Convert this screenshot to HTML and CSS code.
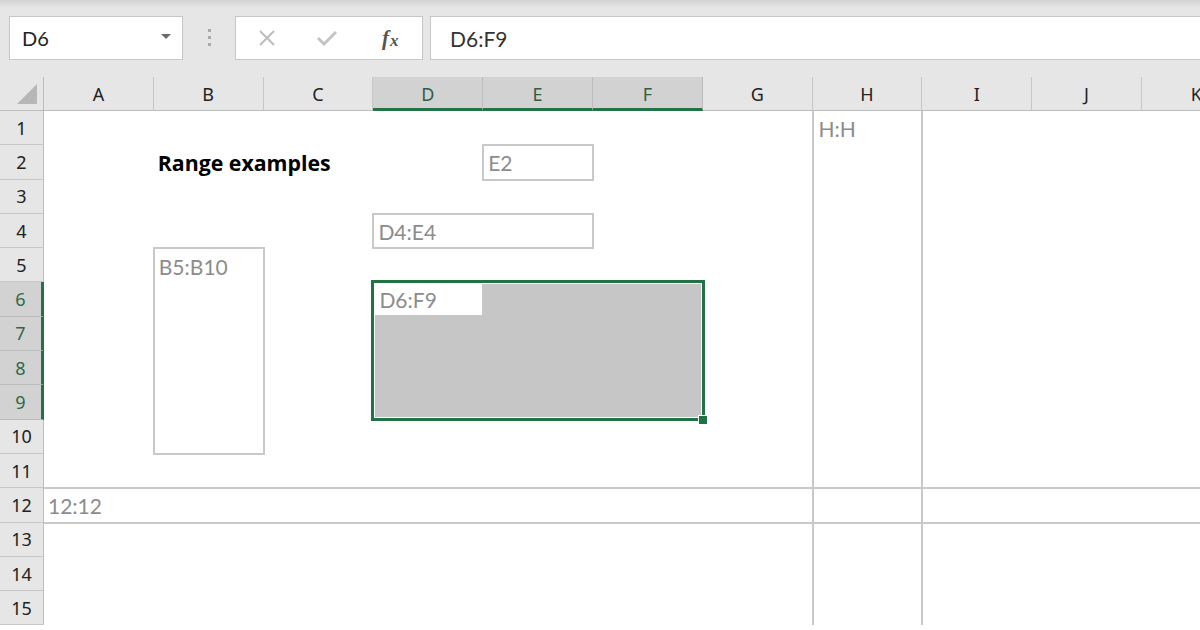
FILE: index.html
```html
<!DOCTYPE html>
<html>
<head>
<meta charset="utf-8">
<link rel="stylesheet" href="styles.css">
</head>
<body>
<div class="toolbar">
  <div class="namebox"><span>D6</span><span class="caret"></span></div>
  <div class="grip"><span></span><span></span><span></span></div>
  <div class="fbtns">
    <svg class="ic-x" width="18" height="16" viewBox="0 0 18 16"><path d="M2 1 L16 15 M16 1 L2 15" stroke="#bdbdbd" stroke-width="2" fill="none"/></svg>
    <svg class="ic-ok" width="22" height="16" viewBox="0 0 22 16"><path d="M2 8 L8 14 L20 2" stroke="#c4c4c4" stroke-width="3" fill="none"/></svg>
    <span class="fx">f<span class="fxx">x</span></span>
  </div>
  <div class="formula">D6:F9</div>
</div>
<div class="sheet">
  <div class="corner"><svg width="20" height="20" viewBox="0 0 20 20"><path d="M20 0 L20 20 L0 20 Z" fill="#b7b7b7"/></svg></div>
  <div class="ch">A</div>
  <div class="ch">B</div>
  <div class="ch">C</div>
  <div class="ch sel-h">D</div>
  <div class="ch sel-h">E</div>
  <div class="ch sel-h">F</div>
  <div class="ch">G</div>
  <div class="ch">H</div>
  <div class="ch">I</div>
  <div class="ch">J</div>
  <div class="ch">K</div>
  <div class="rh">1</div>
  <div class="rh">2</div>
  <div class="rh">3</div>
  <div class="rh">4</div>
  <div class="rh">5</div>
  <div class="rh sel-r">6</div>
  <div class="rh sel-r">7</div>
  <div class="rh sel-r">8</div>
  <div class="rh sel-r">9</div>
  <div class="rh">10</div>
  <div class="rh">11</div>
  <div class="rh">12</div>
  <div class="rh">13</div>
  <div class="rh">14</div>
  <div class="rh">15</div>

  <div class="title">Range examples</div>
  <div class="box e2 val">E2</div>
  <div class="box d4 val">D4:E4</div>
  <div class="box b5 val"><span class="topline">B5:B10</span></div>
  <div class="hcol"></div>
  <div class="hlabel val">H:H</div>
  <div class="row12 val">12:12</div>
  <div class="sel"></div>
  <div class="act val">D6:F9</div>
  <div class="handle"></div>
</div>
</body>
</html>
```
FILE: styles.css
```css
* { box-sizing: border-box; }
body {
  margin: 0;
  width: 1200px;
  height: 630px;
  overflow: hidden;
  background: #fff;
  font-family: "Noto Sans", sans-serif;
}
.toolbar {
  height: 77px;
  background: linear-gradient(#d3d3d3, #e6e6e6 8px);
  display: flex;
  align-items: flex-start;
  padding: 16px 0 0 9px;
}
.namebox {
  width: 174px;
  height: 44px;
  background: #fff;
  border: 1px solid #c6c6c6;
  display: flex;
  align-items: center;
  justify-content: space-between;
  padding: 0 11px 0 12px;
  font-family: "Lato", sans-serif;
  font-size: 20px;
  color: #222;
}
.caret {
  width: 0;
  height: 0;
  border-left: 5px solid transparent;
  border-right: 5px solid transparent;
  border-top: 5px solid #6b6b6b;
  margin-bottom: 4px;
}
.grip {
  width: 52px;
  display: flex;
  flex-direction: column;
  align-items: center;
  gap: 4px;
  padding-top: 13px;
}
.grip span { width: 3px; height: 3px; background: #a9a9a9; }
.fbtns {
  width: 188px;
  height: 44px;
  background: #fff;
  border: 1px solid #c6c6c6;
  display: flex;
  align-items: center;
  padding-left: 22px;
}
.ic-x { margin-right: 40px; }
.ic-ok { margin-right: 44px; }
.fx {
  font-family: "Liberation Serif", serif;
  font-style: italic;
  font-weight: bold;
  font-size: 21px;
  color: #555;
  display: flex;
  align-items: baseline;
}
.fxx { font-size: 17px; position: relative; top: 1px; margin-left: 1px; }
.formula {
  margin-left: 7px;
  flex: 1;
  height: 44px;
  background: #fff;
  border: 1px solid #c6c6c6;
  border-right: none;
  display: flex;
  align-items: center;
  padding-left: 19px;
  font-family: "Lato", sans-serif;
  font-size: 21px;
  color: #333;
}
.sheet {
  display: grid;
  grid-template-columns: 44px repeat(11, 109.8px);
  grid-template-rows: 34px repeat(15, 34.3px);
}
.corner {
  background: #e6e6e6;
  border-right: 1px solid #bdbdbd;
  border-bottom: 1px solid #bdbdbd;
  display: flex;
  align-items: flex-end;
  justify-content: flex-end;
  padding: 0 6px 6px 0;
}
.ch {
  background: #e6e6e6;
  border-right: 1px solid #c6c6c6;
  border-bottom: 1px solid #bdbdbd;
  display: flex;
  align-items: center;
  justify-content: center;
  font-size: 18px;
  color: #222;
}
.ch.sel-h {
  background: #d2d2d2;
  color: #2f5e43;
  border-right-color: #bcbcbc;
  border-bottom: 3px solid #217346;
  padding-top: 2px;
}
.rh {
  grid-column: 1;
  background: #e6e6e6;
  border-right: 1px solid #bdbdbd;
  border-bottom: 1px solid #c6c6c6;
  display: flex;
  align-items: center;
  justify-content: center;
  font-size: 18px;
  color: #222;
}
.rh.sel-r {
  background: #d2d2d2;
  color: #2f6a48;
  border-right: 3px solid #217346;
  border-bottom-color: #bcbcbc;
}
.val {
  font-family: "Lato", sans-serif;
  font-size: 21px;
  color: #8c8c8c;
  display: flex;
  align-items: center;
  padding-left: 4px;
}
.title {
  grid-column: 3 / 5;
  grid-row: 3;
  font-family: "Open Sans", sans-serif;
  font-weight: bold;
  font-size: 21.3px;
  color: #000;
  display: flex;
  align-items: center;
  padding-left: 4px;
}
.box {
  border: 2px solid #c9c9c9;
  margin: -1px;
}
.e2 { grid-column: 6 / 7; grid-row: 3; }
.d4 { grid-column: 5 / 7; grid-row: 5; }
.b5 { grid-column: 3 / 4; grid-row: 6 / 12; align-items: flex-start; }
.topline { height: 34px; display: flex; align-items: center; }
.hcol {
  grid-column: 9;
  grid-row: 2 / -1;
  border-left: 2px solid #c9c9c9;
  border-right: 2px solid #c9c9c9;
  margin: 0 -1px;
}
.hlabel { grid-column: 9; grid-row: 2; padding-left: 6px; }
.row12 {
  grid-column: 2 / -1;
  grid-row: 13;
  border-top: 2px solid #c9c9c9;
  border-bottom: 2px solid #c9c9c9;
  margin: -1px 0;
}
.sel {
  grid-column: 5 / 8;
  grid-row: 7 / 11;
  margin: -2px -2px -1px -2px;
  border: 3px solid #217346;
  background: #c6c6c6;
  box-shadow: inset 0 0 0 1px #fff;
  z-index: 2;
}
.act {
  grid-column: 5;
  grid-row: 7;
  margin: 2px 1px 2px 2px;
  background: #fff;
  z-index: 3;
}
.handle {
  grid-column: 7;
  grid-row: 10;
  justify-self: end;
  align-self: end;
  width: 10px;
  height: 10px;
  background: #217346;
  border: 1px solid #fff;
  margin: 0 -5px -5px 0;
  z-index: 4;
}
```
